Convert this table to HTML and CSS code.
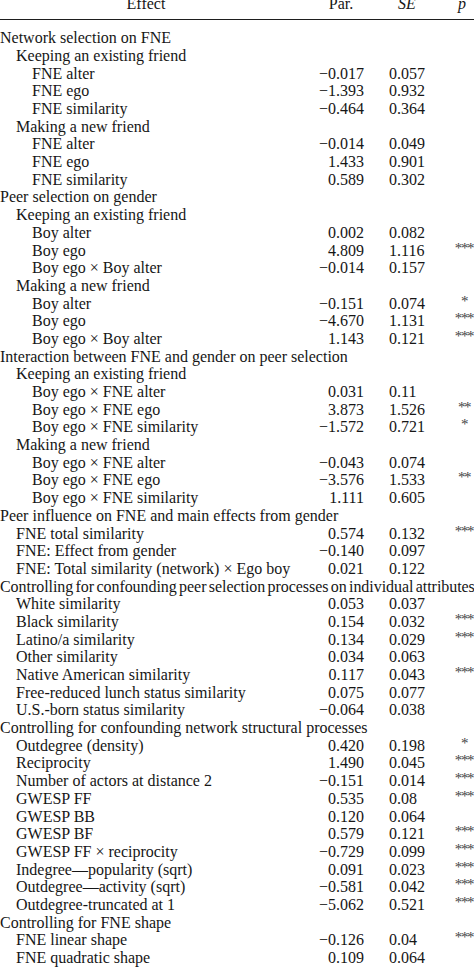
FILE: index.html
```html
<!DOCTYPE html>
<html lang="en">
<head>
<meta charset="utf-8">
<title>Model estimates</title>
<link rel="stylesheet" href="styles.css">
</head>
<body>
<table class="est">
<colgroup><col class="c-eff"><col class="c-par"><col class="c-se"><col class="c-p"></colgroup>
<thead>
<tr><th class="h-eff">Effect</th><th class="h-par">Par.</th><th class="h-se"><i>SE</i></th><th class="h-p"><i>p</i></th></tr>
</thead>
<tbody>
<tr class="first"><td class="sec" colspan="4">Network selection on FNE</td></tr>
<tr><td class="sub" colspan="4">Keeping an existing friend</td></tr>
<tr><td class="l2">FNE alter</td><td class="par">−0.017</td><td class="se">0.057</td><td class="p"></td></tr>
<tr><td class="l2">FNE ego</td><td class="par">−1.393</td><td class="se">0.932</td><td class="p"></td></tr>
<tr><td class="l2">FNE similarity</td><td class="par">−0.464</td><td class="se">0.364</td><td class="p"></td></tr>
<tr><td class="sub" colspan="4">Making a new friend</td></tr>
<tr><td class="l2">FNE alter</td><td class="par">−0.014</td><td class="se">0.049</td><td class="p"></td></tr>
<tr><td class="l2">FNE ego</td><td class="par">1.433</td><td class="se">0.901</td><td class="p"></td></tr>
<tr><td class="l2">FNE similarity</td><td class="par">0.589</td><td class="se">0.302</td><td class="p"></td></tr>
<tr><td class="sec" colspan="4">Peer selection on gender</td></tr>
<tr><td class="sub" colspan="4">Keeping an existing friend</td></tr>
<tr><td class="l2">Boy alter</td><td class="par">0.002</td><td class="se">0.082</td><td class="p"></td></tr>
<tr><td class="l2">Boy ego</td><td class="par">4.809</td><td class="se">1.116</td><td class="p">***</td></tr>
<tr><td class="l2">Boy ego × Boy alter</td><td class="par">−0.014</td><td class="se">0.157</td><td class="p"></td></tr>
<tr><td class="sub" colspan="4">Making a new friend</td></tr>
<tr><td class="l2">Boy alter</td><td class="par">−0.151</td><td class="se">0.074</td><td class="p">*</td></tr>
<tr><td class="l2">Boy ego</td><td class="par">−4.670</td><td class="se">1.131</td><td class="p">***</td></tr>
<tr><td class="l2">Boy ego × Boy alter</td><td class="par">1.143</td><td class="se">0.121</td><td class="p">***</td></tr>
<tr><td class="sec" colspan="4">Interaction between FNE and gender on peer selection</td></tr>
<tr><td class="sub" colspan="4">Keeping an existing friend</td></tr>
<tr><td class="l2">Boy ego × FNE alter</td><td class="par">0.031</td><td class="se">0.11</td><td class="p"></td></tr>
<tr><td class="l2">Boy ego × FNE ego</td><td class="par">3.873</td><td class="se">1.526</td><td class="p">**</td></tr>
<tr><td class="l2">Boy ego × FNE similarity</td><td class="par">−1.572</td><td class="se">0.721</td><td class="p">*</td></tr>
<tr><td class="sub" colspan="4">Making a new friend</td></tr>
<tr><td class="l2">Boy ego × FNE alter</td><td class="par">−0.043</td><td class="se">0.074</td><td class="p"></td></tr>
<tr><td class="l2">Boy ego × FNE ego</td><td class="par">−3.576</td><td class="se">1.533</td><td class="p">**</td></tr>
<tr><td class="l2">Boy ego × FNE similarity</td><td class="par">1.111</td><td class="se">0.605</td><td class="p"></td></tr>
<tr><td class="sec" colspan="4">Peer influence on FNE and main effects from gender</td></tr>
<tr><td class="l1">FNE total similarity</td><td class="par">0.574</td><td class="se">0.132</td><td class="p">***</td></tr>
<tr><td class="l1">FNE: Effect from gender</td><td class="par">−0.140</td><td class="se">0.097</td><td class="p"></td></tr>
<tr><td class="l1">FNE: Total similarity (network) × Ego boy</td><td class="par">0.021</td><td class="se">0.122</td><td class="p"></td></tr>
<tr><td class="sec tight" colspan="4">Controlling for confounding peer selection processes on individual attributes</td></tr>
<tr><td class="l1">White similarity</td><td class="par">0.053</td><td class="se">0.037</td><td class="p"></td></tr>
<tr><td class="l1">Black similarity</td><td class="par">0.154</td><td class="se">0.032</td><td class="p">***</td></tr>
<tr><td class="l1">Latino/a similarity</td><td class="par">0.134</td><td class="se">0.029</td><td class="p">***</td></tr>
<tr><td class="l1">Other similarity</td><td class="par">0.034</td><td class="se">0.063</td><td class="p"></td></tr>
<tr><td class="l1">Native American similarity</td><td class="par">0.117</td><td class="se">0.043</td><td class="p">***</td></tr>
<tr><td class="l1">Free-reduced lunch status similarity</td><td class="par">0.075</td><td class="se">0.077</td><td class="p"></td></tr>
<tr><td class="l1">U.S.-born status similarity</td><td class="par">−0.064</td><td class="se">0.038</td><td class="p"></td></tr>
<tr><td class="sec" colspan="4">Controlling for confounding network structural processes</td></tr>
<tr><td class="l1">Outdegree (density)</td><td class="par">0.420</td><td class="se">0.198</td><td class="p">*</td></tr>
<tr><td class="l1">Reciprocity</td><td class="par">1.490</td><td class="se">0.045</td><td class="p">***</td></tr>
<tr><td class="l1">Number of actors at distance 2</td><td class="par">−0.151</td><td class="se">0.014</td><td class="p">***</td></tr>
<tr><td class="l1">GWESP FF</td><td class="par">0.535</td><td class="se">0.08</td><td class="p">***</td></tr>
<tr><td class="l1">GWESP BB</td><td class="par">0.120</td><td class="se">0.064</td><td class="p"></td></tr>
<tr><td class="l1">GWESP BF</td><td class="par">0.579</td><td class="se">0.121</td><td class="p">***</td></tr>
<tr><td class="l1">GWESP FF × reciprocity</td><td class="par">−0.729</td><td class="se">0.099</td><td class="p">***</td></tr>
<tr><td class="l1">Indegree—popularity (sqrt)</td><td class="par">0.091</td><td class="se">0.023</td><td class="p">***</td></tr>
<tr><td class="l1">Outdegree—activity (sqrt)</td><td class="par">−0.581</td><td class="se">0.042</td><td class="p">***</td></tr>
<tr><td class="l1">Outdegree-truncated at 1</td><td class="par">−5.062</td><td class="se">0.521</td><td class="p">***</td></tr>
<tr><td class="sec" colspan="4">Controlling for FNE shape</td></tr>
<tr><td class="l1">FNE linear shape</td><td class="par">−0.126</td><td class="se">0.04</td><td class="p">***</td></tr>
<tr><td class="l1">FNE quadratic shape</td><td class="par">0.109</td><td class="se">0.064</td><td class="p"></td></tr>
</tbody>
</table>
</body>
</html>
```
FILE: styles.css
```css
html, body {
  margin: 0;
  padding: 0;
  background: #ffffff;
}
body {
  font-family: "Liberation Serif", "Times New Roman", serif;
  font-size: 16px;
  color: #161616;
  overflow: hidden;
}
.est {
  width: 474px;
  table-layout: fixed;
  border-collapse: collapse;
  border-spacing: 0;
}
.c-eff { width: 318px; }
.c-par { width: 46px; }
.c-se { width: 86px; }
.c-p { width: 24px; }
th, td {
  padding: 0;
  line-height: 17.68px;
  white-space: nowrap;
  vertical-align: top;
}
th {
  font-weight: normal;
  line-height: 8px;
  padding-bottom: 11px;
  border-bottom: 1px solid #1e1e1e;
  text-align: center;
}
.h-eff { padding-right: 26px; }
.first td { padding-top: 9.3px; }
.sec { padding-left: 0; }
.tight { word-spacing: -1.6px; letter-spacing: -0.05px; }
.sub, .l1 { padding-left: 16px; }
.l2 { padding-left: 32px; }
.par { text-align: right; }
.se { padding-left: 25px; }
.p {
  text-align: center;
  padding-left: 4px;
  color: #444444;
  font-size: 15px;
  letter-spacing: -1.4px;
  line-height: 12px;
}
```
